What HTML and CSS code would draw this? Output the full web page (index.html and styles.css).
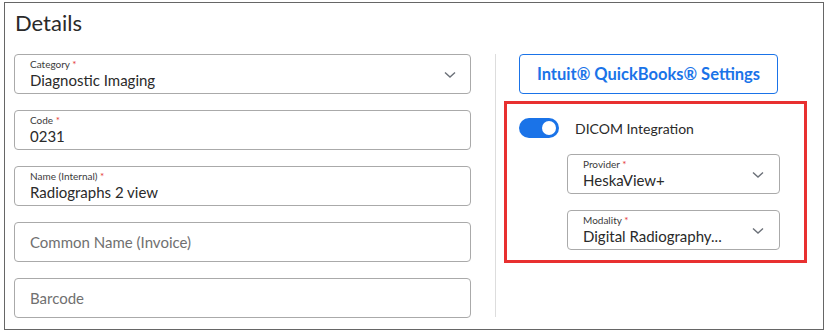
FILE: index.html
```html
<!DOCTYPE html>
<html>
<head>
<meta charset="utf-8">
<link rel="stylesheet" href="styles.css">
</head>
<body>
<div class="card">
  <h1 class="title">Details</h1>
  <div class="content">
    <div class="left">
      <div class="field">
        <div class="label">Category <span class="req">*</span></div>
        <div class="value">Diagnostic Imaging</div>
        <svg class="chev" width="12" height="8" viewBox="0 0 12 8"><path d="M1 1.5 L6 6 L11 1.5" fill="none" stroke="#6b7078" stroke-width="1.4"/></svg>
      </div>
      <div class="field">
        <div class="label">Code <span class="req">*</span></div>
        <div class="value">0231</div>
      </div>
      <div class="field">
        <div class="label">Name (Internal) <span class="req">*</span></div>
        <div class="value">Radiographs 2 view</div>
      </div>
      <div class="field empty">
        <div class="placeholder">Common Name (Invoice)</div>
      </div>
      <div class="field empty">
        <div class="placeholder">Barcode</div>
      </div>
    </div>
    <div class="divider"></div>
    <div class="right">
      <button class="qb-btn">Intuit® QuickBooks® Settings</button>
      <div class="highlight">
        <div class="toggle-row">
          <span class="toggle"><span class="knob"></span></span>
          <span class="toggle-label">DICOM Integration</span>
        </div>
        <div class="sub-fields">
          <div class="field small">
            <div class="label">Provider <span class="req">*</span></div>
            <div class="value">HeskaView+</div>
            <svg class="chev" width="12" height="8" viewBox="0 0 12 8"><path d="M1 1.5 L6 6 L11 1.5" fill="none" stroke="#6b7078" stroke-width="1.4"/></svg>
          </div>
          <div class="field small">
            <div class="label">Modality <span class="req">*</span></div>
            <div class="value">Digital Radiography...</div>
            <svg class="chev" width="12" height="8" viewBox="0 0 12 8"><path d="M1 1.5 L6 6 L11 1.5" fill="none" stroke="#6b7078" stroke-width="1.4"/></svg>
          </div>
        </div>
      </div>
    </div>
  </div>
</div>
</body>
</html>
```

FILE: styles.css
```css
* { box-sizing: border-box; }
body {
  margin: 0;
  background: #fff;
  font-family: Lato, "Open Sans", Arial, sans-serif;
  color: #2a2a2a;
}
.card {
  margin: 2px 0 0 4px;
  width: 820px;
  height: 328px;
  border: 1px solid #666;
  padding: 0 0 0 9px;
}
.title {
  margin: 0;
  padding: 6px 0 0 1px;
  height: 51px;
  font-size: 22px;
  font-weight: 400;
  line-height: 28px;
  color: #2a2a2a;
}
.content {
  display: flex;
}
.left {
  width: 457px;
  display: flex;
  flex-direction: column;
  gap: 16px;
}
.field {
  position: relative;
  height: 40px;
  border: 1px solid #aaa;
  border-radius: 4px;
  padding: 3px 0 0 15px;
}
.label {
  font-size: 10px;
  line-height: 13px;
  color: #3a3a3a;
}
.req { color: #e53935; }
.value {
  font-size: 15px;
  line-height: 19px;
  color: #2a2a2a;
}
.field.empty {
  display: flex;
  align-items: center;
  padding-top: 0;
}
.placeholder {
  font-size: 15px;
  color: #707070;
}
.chev {
  position: absolute;
  right: 14px;
  top: 16px;
}
.divider {
  width: 1px;
  background: #ddd;
  margin-left: 24px;
  height: 263px;
}
.right {
  padding-left: 8px;
  display: flex;
  flex-direction: column;
}
.qb-btn {
  margin-left: 15px;
  width: 259px;
  height: 40px;
  border: 1px solid #1a73e8;
  border-radius: 4px;
  background: #fff;
  color: #1a73e8;
  font-family: inherit;
  font-size: 16.5px;
  font-weight: 700;
  padding: 0;
}
.highlight {
  margin-top: 7px;
  width: 303px;
  height: 162px;
  border: 3px solid #e83030;
  padding: 14px 0 0 12px;
}
.toggle-row {
  display: flex;
  align-items: center;
  height: 20px;
}
.toggle {
  position: relative;
  width: 40px;
  height: 20px;
  border-radius: 10px;
  background: #1a73e8;
}
.knob {
  position: absolute;
  right: 3px;
  top: 3px;
  width: 14px;
  height: 14px;
  border-radius: 50%;
  background: #fff;
}
.toggle-label {
  margin-left: 16px;
  font-size: 14px;
  color: #2a2a2a;
}
.sub-fields {
  margin: 16px 0 0 48px;
  display: flex;
  flex-direction: column;
  gap: 16px;
  width: 213px;
}
.field.small .chev { right: 15px; }
```
